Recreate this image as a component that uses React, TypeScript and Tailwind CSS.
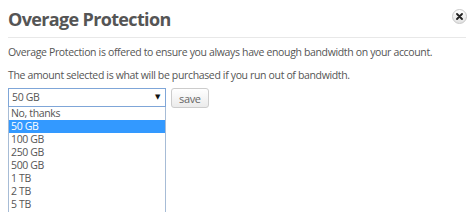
import React, { useState } from 'react';

const OPTIONS = ['No, thanks', '50 GB', '100 GB', '250 GB', '500 GB', '1 TB', '2 TB', '5 TB'];

export default function App() {
  const [selected] = useState('50 GB');

  return (
    <div
      className="w-[474px] h-[212px] overflow-hidden bg-white text-[#555]"
      style={{ fontFamily: '"Open Sans", "DejaVu Sans", sans-serif' }}
    >
      {/* Header */}
      <div className="mx-2 flex items-center justify-between border-b border-[#e8e8e8] h-[38px]">
        <h1 className="text-[18px] font-bold tracking-[-0.65px] text-[#555] leading-none">Overage Protection</h1>
        <button className="w-[15px] h-[15px] -mt-[5px] rounded-full border border-[#c8c8c8] bg-gradient-to-b from-white to-[#e2e2e2] flex items-center justify-center -mr-[1px]">
          <svg width="7" height="7" viewBox="0 0 7 7">
            <path d="M1 1L6 6M6 1L1 6" stroke="#222" strokeWidth="1.8" strokeLinecap="round" />
          </svg>
        </button>
      </div>

      <div className="px-2 text-[10.5px] tracking-[-0.35px] text-[#555]">
        <p className="mt-[7px] leading-[14px]">
          Overage Protection is offered to ensure you always have enough bandwidth on your account.
        </p>
        <p className="mt-[9px] leading-[14px]">
          The amount selected is what will be purchased if you run out of bandwidth.
        </p>

        <div className="mt-[6px] flex items-start gap-[5px]">
          <div className="w-[158px]">
            <div className="h-[19px] border border-[#7fa6d8] flex items-center justify-between pl-[3px] pr-[5px]">
              <span>{selected}</span>
              <span className="text-[7px] text-[#111]">▼</span>
            </div>
            <div className="border-x border-[#a7bcd6] h-[110px] overflow-hidden">
              {OPTIONS.map((o) => (
                <div
                  key={o}
                  className={
                    'h-[13px] leading-[13px] pl-[2px] ' +
                    (o === selected ? 'bg-[#3399ff] text-white' : 'text-[#555]')
                  }
                >
                  {o}
                </div>
              ))}
            </div>
          </div>
          <button className="h-[20px] px-[7px] border border-[#ccc] rounded-[3px] bg-gradient-to-b from-white to-[#ebebeb] text-[11px] text-[#666] leading-none">
            save
          </button>
        </div>
      </div>
    </div>
  );
}
